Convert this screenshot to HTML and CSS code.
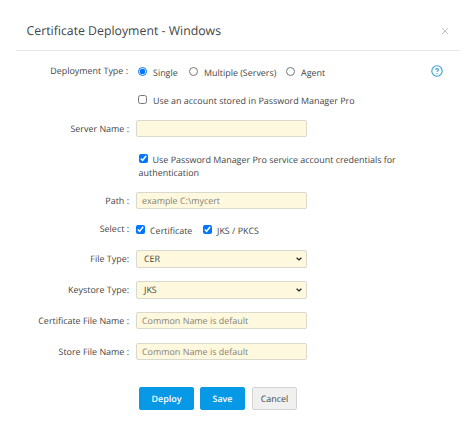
FILE: index.html
```
<!DOCTYPE html>
<html lang="en">
<head>
<meta charset="utf-8">
<title>Certificate Deployment - Windows</title>
<link rel="stylesheet" href="styles.css">
</head>
<body>
<div class="dialog">
  <header class="dialog-header">
    <h1><span>Certificate Deployment - Windows</span></h1>
    <button class="close" type="button" aria-label="Close"><svg viewBox="0 0 8 8"><path d="M1 1l6 6M7 1L1 7"/></svg></button>
  </header>
  <form class="form">
    <div class="row row-type">
      <span class="label">Deployment Type :</span>
      <div class="choices">
        <label class="choice single"><input type="radio" name="type" checked><span>Single</span></label>
        <label class="choice multiple"><input type="radio" name="type"><span>Multiple (Servers)</span></label>
        <label class="choice"><input type="radio" name="type"><span>Agent</span></label>
      </div>
      <svg class="help" viewBox="0 0 12 12"><circle cx="6" cy="6" r="5.2"/><path class="mark" d="M4.600 4.900c.1-1.700 2.900-1.600 2.800 0C7.400 5.900 6 5.900 6 7M6 8v.9"/></svg>
    </div>
    <div class="row row-account">
      <label class="choice indent"><input type="checkbox"><span>Use an account stored in Password Manager Pro</span></label>
    </div>
    <div class="row row-server">
      <span class="label">Server Name :</span>
      <input class="field" type="text" aria-label="Server Name">
    </div>
    <div class="row row-service">
      <label class="choice indent wrap"><input type="checkbox" checked><span>Use Password Manager Pro service account credentials for</span><br><span class="cont">authentication</span></label>
    </div>
    <div class="row row-path">
      <span class="label">Path :</span>
      <input class="field" type="text" placeholder="example C:\mycert">
    </div>
    <div class="row row-select">
      <span class="label">Select :</span>
      <div class="choices">
        <label class="choice cert"><input type="checkbox" checked><span>Certificate</span></label>
        <label class="choice"><input type="checkbox" checked><span>JKS / PKCS</span></label>
      </div>
    </div>
    <div class="row">
      <span class="label">File Type:</span>
      <div class="field select"><span>CER</span><svg viewBox="0 0 6 4"><path d="M.6.7L3 2.900 5.400.7"/></svg></div>
    </div>
    <div class="row">
      <span class="label">Keystore Type:</span>
      <div class="field select"><span>JKS</span><svg viewBox="0 0 6 4"><path d="M.6.7L3 2.900 5.400.7"/></svg></div>
    </div>
    <div class="row">
      <span class="label">Certificate File Name :</span>
      <input class="field" type="text" placeholder="Common Name is default">
    </div>
    <div class="row">
      <span class="label">Store File Name :</span>
      <input class="field" type="text" placeholder="Common Name is default">
    </div>
    <div class="actions">
      <button class="btn primary deploy" type="button">Deploy</button>
      <button class="btn primary save" type="button">Save</button>
      <button class="btn" type="button">Cancel</button>
    </div>
  </form>
</div>
</body>
</html>
```

FILE: styles.css
```
* { box-sizing: border-box; }
body {
  margin: 0;
  background: #fff;
  color: #444;
  font: 8.93px/13px "Open Sans", sans-serif;
  text-rendering: geometricPrecision;
}
.dialog { padding: 0 14px 0 16px; height: 434px; }
.dialog-header {
  display: flex;
  justify-content: space-between;
  align-items: center;
  height: 51px;
  padding: 12px 11px 0 10.5px;
  border-bottom: 1px solid #e6e6e6;
}
h1 { margin: 0; font-size: 12.3px; line-height: 18px; font-weight: 400; }
.close { width: 8px; height: 8px; padding: 0; border: 0; background: none; }
.close svg { display: block; width: 8px; height: 8px; fill: none; stroke: #c4c4c4; stroke-width: 1; }
.form { padding-top: 4px; }
.row {
  display: grid;
  grid-template-columns: 113px 1fr auto;
  column-gap: 7px;
  align-items: center;
  height: 31px;
}
.label { text-align: right; white-space: nowrap; }
.choices { display: flex; padding: 3px 0 0 2px; }
.choice { display: flex; align-items: center; white-space: nowrap; }
.choice input { flex: none; width: 9px; height: 9px; margin: -1px 6px 0 0; }
.single { width: 51px; }
.multiple { width: 97px; }
.indent { grid-column: 2; padding-left: 2px; }
.help { width: 12px; height: 12px; margin-right: 17px; fill: none; stroke: #3a9fd0; stroke-width: 1.1; }
.row-type .label { padding-right: 1px; }
.row-account { height: 29px; }
.row-account .choice input { margin-top: -2px; }
.row-server { height: 27px; }
.row-service { height: 46px; }
.wrap { display: block; padding: 1px 0 0 2.6px; line-height: 13px; }
.wrap input { vertical-align: 0; margin: 0 5px 0 0; }
.row-path { height: 25px; }
.row-select { height: 30px; }
.row-select .choices { padding: 5px 0 0; }
.row-select .choice input { margin: -2px 5px 0 0; }
.cert { width: 67px; }
.field {
  width: 171px;
  height: 17px;
  padding: 0 5px;
  border: 1px solid #d9d9ce;
  border-radius: 2px;
  background: #fef8df;
  color: #444;
  font: inherit;
  text-rendering: inherit;
}
.field::placeholder { color: #858172; opacity: 1; }
.select { display: flex; align-items: center; justify-content: space-between; height: 18px; padding: 0 4px 0 7px; }
.select svg { width: 6px; height: 4px; fill: none; stroke: #222; stroke-width: 1.3; }
.actions { display: flex; padding: 20px 0 0 123px; }
.btn {
  width: 45px;
  height: 23px;
  padding: 0;
  border: 1px solid #d4d4d4;
  border-radius: 2px;
  background: #f0f0f0;
  color: #444;
  font: inherit;
  text-rendering: inherit;
}
.primary { border-color: #0799e6; background: #0799e6; color: #fff; font-weight: 600; }
.deploy { width: 55px; margin-right: 6px; }
.save { margin-right: 7px; }
```
